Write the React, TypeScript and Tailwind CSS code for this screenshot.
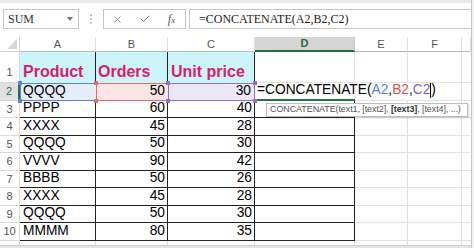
import { Fragment } from "react";
import { X, Check } from "lucide-react";

// rows 2..10 of the sheet
const rows: [string, number, number][] = [
  ["QQQQ", 50, 30],
  ["PPPP", 60, 40],
  ["XXXX", 45, 28],
  ["QQQQ", 50, 30],
  ["VVVV", 90, 42],
  ["BBBB", 50, 26],
  ["XXXX", 45, 28],
  ["QQQQ", 50, 30],
  ["MMMM", 80, 35],
];

const letters = ["A", "B", "C", "D", "E", "F", ""];

export default function App() {
  return (
    <div className="w-[474px] h-[248px] overflow-hidden bg-white flex relative font-['Liberation_Sans',Arial,sans-serif]">
      <div className="w-[471px] flex flex-col">
        <div className="h-[3px] bg-[#e9e9e9]"></div>

        {/* formula bar */}
        <div className="h-[34px] flex items-start pt-[6px]">
          <div className="ml-[3px] w-[76px] h-[20px] border border-[#c6c6c6] flex items-center justify-between pl-[4px] pr-[5px] font-['Liberation_Serif',serif] text-[12px] text-[#333]">
            <span>SUM</span>
            <svg width="6" height="4" viewBox="0 0 6 4">
              <path d="M0 0h6L3 4z" fill="#777" />
            </svg>
          </div>
          <div className="w-[24px] h-[20px] flex flex-col items-center justify-center gap-[2px]">
            <div className="w-[2px] h-[2px] bg-[#c8c8c8]"></div>
            <div className="w-[2px] h-[2px] bg-[#c8c8c8]"></div>
            <div className="w-[2px] h-[2px] bg-[#c8c8c8]"></div>
          </div>
          <div className="w-[83px] h-[20px] border border-[#c6c6c6] grid grid-cols-3 items-center justify-items-center text-[#666]">
            <X size={11} strokeWidth={1.5} />
            <Check size={12} strokeWidth={1.8} />
            <span className="font-['Liberation_Serif',serif] italic text-[12px] leading-none text-[#555]">
              f<span className="text-[9px]">x</span>
            </span>
          </div>
          <div className="ml-[3px] flex-1 h-[20px] border-y border-l border-[#c6c6c6] flex items-center pl-[9px] font-['Liberation_Serif',serif] text-[12px] text-[#222]">
            =CONCATENATE(A2,B2,C2)
          </div>
        </div>

        {/* sheet */}
        <div className="grid grid-cols-[20px_76px_72px_87px_100px_53px_54px_9px] grid-rows-[15px_31px_repeat(9,17.5px)_4px]">
          {/* column headers */}
          <div className="border-r border-b border-[#d0d0d0] flex items-end justify-end pr-[2px] pb-[2px]">
            <svg width="10" height="10" viewBox="0 0 10 10">
              <path d="M10 0V10H0z" fill="#d6d6d6" />
            </svg>
          </div>
          {letters.map((l) =>
            l === "D" ? (
              <div
                key={l}
                className="bg-[#d6d6d6] border-r border-[#c8c8c8] border-b-2 border-b-[#217346] flex items-center justify-center text-[11px] font-bold text-[#1e6b3e]"
              >
                D
              </div>
            ) : (
              <div
                key={l || "g"}
                className="border-r border-b border-r-[#e0e0e0] border-b-[#b9b9b9] flex items-center justify-center text-[11px] text-[#555]"
              >
                {l}
              </div>
            )
          )}

          {/* row 1 */}
          <div className="border-r border-b border-[#dadada] flex items-end justify-center pb-[2px] text-[11px] text-[#555]">
            1
          </div>
          <div className="bg-[#ccf5fa] border-r border-[#222] flex items-end pl-[3px] pb-[1px] text-[16px] font-bold text-[#e3186f] leading-tight">
            Product
          </div>
          <div className="bg-[#ccf5fa] border-r border-[#222] flex items-end pl-[2px] pb-[1px] text-[16px] font-bold text-[#e3186f] leading-tight">
            Orders
          </div>
          <div className="bg-[#ccf5fa] border-r border-[#222] flex items-end pl-[3px] pb-[1px] text-[16px] font-bold text-[#e3186f] leading-tight whitespace-nowrap">
            Unit price
          </div>
          <div className="border-r border-b border-[#e1e1e1]"></div>
          <div className="border-r border-b border-[#e1e1e1]"></div>
          <div className="border-r border-b border-[#e1e1e1]"></div>
          <div className="border-b border-[#e1e1e1]"></div>

          {/* rows 2..10 */}
          {rows.map(([p, o, u], i) => {
            const n = i + 2;
            if (n === 2) {
              return (
                <Fragment key={n}>
                  <div className="bg-[#e1e1e1] border-r-2 border-r-[#217346] border-b border-b-[#d0d0d0] flex items-center justify-center text-[11px] text-[#217346]">
                    2
                  </div>
                  <div className="relative bg-[#e6ecf8] border-y border-l border-[#5b84d6] flex items-center pl-[2px] text-[13.75px] text-black">
                    {p}
                    <div className="absolute -left-[3px] -top-[3px] w-[4px] h-[4px] bg-[#5b84d6]"></div>
                    <div className="absolute -left-[3px] -bottom-[3px] w-[4px] h-[4px] bg-[#5b84d6]"></div>
                  </div>
                  <div className="relative bg-[#fbe5e5] border-y border-l border-[#e06c6c] flex items-center justify-end pr-[3px] text-[13.75px] text-black">
                    {o}
                    <div className="absolute -left-[3px] -top-[3px] w-[4px] h-[4px] bg-[#e06c6c]"></div>
                    <div className="absolute -left-[3px] -bottom-[3px] w-[4px] h-[4px] bg-[#e06c6c]"></div>
                  </div>
                  <div className="relative bg-[#ece7f4] border border-[#9070c6] flex items-center justify-end pr-[3px] text-[13.75px] text-black">
                    {u}
                    <div className="absolute -left-[3px] -top-[3px] w-[4px] h-[4px] bg-[#9070c6]"></div>
                    <div className="absolute -left-[3px] -bottom-[3px] w-[4px] h-[4px] bg-[#9070c6]"></div>
                    <div className="absolute -right-[3px] -top-[3px] w-[4px] h-[4px] bg-[#9070c6]"></div>
                    <div className="absolute -right-[3px] -bottom-[3px] w-[4px] h-[4px] bg-[#9070c6]"></div>
                  </div>
                  <div className="border-b-2 border-[#217346] flex items-center pl-[2px]">
                    <span className="relative z-10 whitespace-nowrap text-[13.75px] text-black flex items-center">
                      =CONCATENATE(
                      <span className="text-[#5683d8]">A2</span>,
                      <span className="text-[#e0504f]">B2</span>,
                      <span className="text-[#8062c2]">C2</span>
                      <span className="w-px h-[15px] bg-black"></span>)
                    </span>
                  </div>
                  <div className="border-b border-[#e1e1e1]"></div>
                  <div className="border-r border-b border-[#e1e1e1]"></div>
                  <div className="border-b border-[#e1e1e1]"></div>
                </Fragment>
              );
            }
            return (
              <Fragment key={n}>
                <div className="border-r border-b border-[#dadada] flex items-center justify-center text-[11px] text-[#555]">
                  {n}
                </div>
                <div className="border-r border-b border-[#222] flex items-center pl-[3px] text-[13.75px] text-black">
                  {p}
                </div>
                <div className="border-r border-b border-[#222] flex items-center justify-end pr-[2px] text-[13.75px] text-black">
                  {o}
                </div>
                <div className="border-r border-b border-[#222] flex items-center justify-end pr-[2px] text-[13.75px] text-black">
                  {u}
                </div>
                <div className="border-r border-b border-[#222]"></div>
                <div className="border-r border-b border-[#e1e1e1]"></div>
                <div className="border-r border-b border-[#e1e1e1]"></div>
                <div className="border-b border-[#e1e1e1]"></div>
              </Fragment>
            );
          })}

          {/* partial row 11 */}
          <div className="border-r border-[#dadada]"></div>
          <div className="border-r border-[#e1e1e1]"></div>
          <div className="border-r border-[#e1e1e1]"></div>
          <div className="border-r border-[#e1e1e1]"></div>
          <div className="border-r border-[#e1e1e1]"></div>
          <div className="border-r border-[#e1e1e1]"></div>
          <div className="border-r border-[#e1e1e1]"></div>
          <div></div>
        </div>
        <div className="flex-1 bg-[#e4e4e4] border-t border-[#cfcfcf]"></div>
      </div>
      <div className="w-[3px] border-l border-[#c6c6c6] bg-[#f2f2f2]"></div>

      {/* function tooltip */}
      <div className="absolute left-[266px] top-[103px] w-[202px] h-[14px] bg-white border border-[#bdbdbd] shadow-[1px_1px_2px_rgba(0,0,0,0.15)] px-[3px] flex items-center whitespace-nowrap text-[9px] tracking-[-0.1px] text-[#555]">
        CONCATENATE(text1, [text2],&nbsp;<b className="text-[#333]">[text3]</b>, [text4], ...)
      </div>
    </div>
  );
}
